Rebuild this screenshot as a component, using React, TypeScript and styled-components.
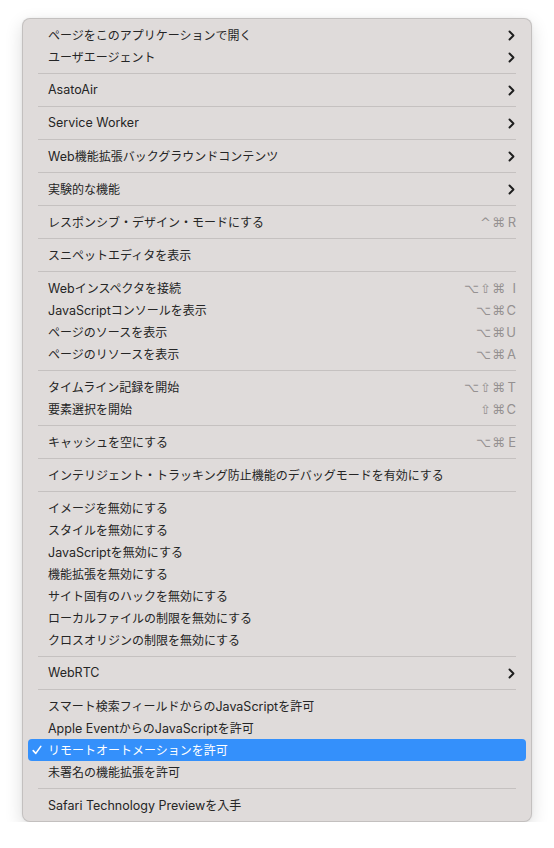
import React from "react";
import styled, { createGlobalStyle } from "styled-components";

const GlobalStyle = createGlobalStyle`
  html, body {
    margin: 0;
    padding: 0;
    background: #ffffff;
  }
  body {
    font-family: "Inter", "Noto Sans CJK JP", sans-serif;
    -webkit-font-smoothing: antialiased;
  }
`;

const Page = styled.div`
  padding: 18px 0 0 22px;
`;

const Panel = styled.div`
  width: 510px;
  box-sizing: border-box;
  padding: 5px 0;
  background: #dfdbda;
  border-radius: 8px;
  border: 1px solid rgba(0, 0, 0, 0.12);
  box-shadow: 0 6px 18px rgba(0, 0, 0, 0.14), 0 0 3px rgba(0, 0, 0, 0.06);
  display: flex;
  flex-direction: column;
`;

const Row = styled.div<{ $active?: boolean }>`
  height: 22px;
  margin: 0 5px;
  padding: 0 10px 0 20px;
  border-radius: 4px;
  display: flex;
  align-items: center;
  position: relative;
  font-size: 12.5px;
  color: ${(p) => (p.$active ? "#ffffff" : "#252525")};
  background: ${(p) => (p.$active ? "#3490fb" : "transparent")};
`;

const Check = styled.span`
  position: absolute;
  left: 4px;
  top: 0;
  height: 22px;
  display: flex;
  align-items: center;
`;

const Label = styled.span`
  flex: 1;
  white-space: nowrap;
  line-height: 22px;
`;

const Run = styled.span<{ $cjk?: boolean }>`
  font-family: ${(p) => (p.$cjk ? '"Noto Sans CJK JP", sans-serif' : '"Inter", "Noto Sans CJK JP", sans-serif')};
  font-size: ${(p) => (p.$cjk ? "12px" : "12.5px")};
`;

const Shortcut = styled.span`
  display: flex;
  align-items: center;
  gap: 1px;
  color: #959191;
`;

const Key = styled.span<{ $letter?: boolean }>`
  font-family: ${(p) => (p.$letter ? '"Inter", sans-serif' : '"DejaVu Sans", sans-serif')};
  font-size: 13px;
  min-width: ${(p) => (p.$letter ? "10px" : "0")};
  text-align: right;
`;

const Separator = styled.div`
  height: 1px;
  margin: 5px 15px 5px 15px;
  background: #c5c1c0;
`;

const Chevron = () => (
  <svg width="7" height="11" viewBox="0 0 7 11" style={{ marginRight: 1 }}>
    <polyline
      points="1.5,1.5 5.5,5.5 1.5,9.5"
      fill="none"
      stroke="#1e1e1e"
      strokeWidth="1.9"
      strokeLinecap="round"
      strokeLinejoin="round"
    />
  </svg>
);

const CheckMark = () => (
  <svg width="10" height="10" viewBox="0 0 10 10">
    <polyline
      points="1.2,5.6 3.8,8.4 8.8,1.4"
      fill="none"
      stroke="#ffffff"
      strokeWidth="1.6"
      strokeLinecap="round"
      strokeLinejoin="round"
    />
  </svg>
);

type Item =
  | { type: "sep" }
  | { type: "item"; label: string; sub?: boolean; keys?: string[]; checked?: boolean };

const sep: Item = { type: "sep" };
const it = (label: string, extra: Partial<Omit<Extract<Item, { type: "item" }>, "type" | "label">> = {}): Item => ({
  type: "item",
  label,
  ...extra,
});

const items: Item[] = [
  it("ページをこのアプリケーションで開く", { sub: true }),
  it("ユーザエージェント", { sub: true }),
  sep,
  it("AsatoAir", { sub: true }),
  sep,
  it("Service Worker", { sub: true }),
  sep,
  it("Web機能拡張バックグラウンドコンテンツ", { sub: true }),
  sep,
  it("実験的な機能", { sub: true }),
  sep,
  it("レスポンシブ・デザイン・モードにする", { keys: ["^", "⌘", "R"] }),
  sep,
  it("スニペットエディタを表示"),
  sep,
  it("Webインスペクタを接続", { keys: ["⌥", "⇧", "⌘", "I"] }),
  it("JavaScriptコンソールを表示", { keys: ["⌥", "⌘", "C"] }),
  it("ページのソースを表示", { keys: ["⌥", "⌘", "U"] }),
  it("ページのリソースを表示", { keys: ["⌥", "⌘", "A"] }),
  sep,
  it("タイムライン記録を開始", { keys: ["⌥", "⇧", "⌘", "T"] }),
  it("要素選択を開始", { keys: ["⇧", "⌘", "C"] }),
  sep,
  it("キャッシュを空にする", { keys: ["⌥", "⌘", "E"] }),
  sep,
  it("インテリジェント・トラッキング防止機能のデバッグモードを有効にする"),
  sep,
  it("イメージを無効にする"),
  it("スタイルを無効にする"),
  it("JavaScriptを無効にする"),
  it("機能拡張を無効にする"),
  it("サイト固有のハックを無効にする"),
  it("ローカルファイルの制限を無効にする"),
  it("クロスオリジンの制限を無効にする"),
  sep,
  it("WebRTC", { sub: true }),
  sep,
  it("スマート検索フィールドからのJavaScriptを許可"),
  it("Apple EventからのJavaScriptを許可"),
  it("リモートオートメーションを許可", { checked: true }),
  it("未署名の機能拡張を許可"),
  sep,
  it("Safari Technology Previewを入手"),
];

const isLetter = (k: string) => /^[A-Z]$/.test(k);
const cjkRe = /([\u3000-\u30ff\u4e00-\u9fff\uff00-\uffef]+)/;

const renderLabel = (label: string) =>
  label
    .split(cjkRe)
    .filter((s) => s.length > 0)
    .map((s, i) => (
      <Run key={i} $cjk={cjkRe.test(s)}>
        {s}
      </Run>
    ));

export default function App() {
  return (
    <>
      <GlobalStyle />
      <Page>
        <Panel>
          {items.map((item, i) =>
            item.type === "sep" ? (
              <Separator key={i} />
            ) : (
              <Row key={i} $active={item.checked}>
                {item.checked && (
                  <Check>
                    <CheckMark />
                  </Check>
                )}
                <Label>{renderLabel(item.label)}</Label>
                {item.sub && <Chevron />}
                {item.keys && (
                  <Shortcut>
                    {item.keys.map((k, j) => (
                      <Key key={j} $letter={isLetter(k)}>
                        {k}
                      </Key>
                    ))}
                  </Shortcut>
                )}
              </Row>
            )
          )}
        </Panel>
      </Page>
    </>
  );
}
